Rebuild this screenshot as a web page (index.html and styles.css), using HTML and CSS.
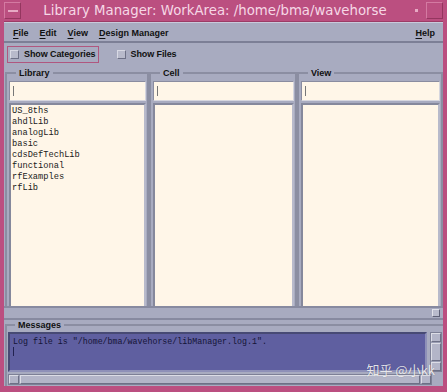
FILE: index.html
```html
<!DOCTYPE html>
<html lang="en">
<head>
    <meta charset="UTF-8">
    <meta name="viewport" content="width=device-width, initial-scale=1.0">
    <title>Library Manager</title>
    <link rel="stylesheet" href="styles.css">
</head>
<body>
    <div class="window">
        <div class="titlebar">
            <span class="tb-btn"><span class="tb-dash"></span></span>
            <span class="title">Library Manager: WorkArea: /home/bma/wavehorse</span>
            <span class="tb-dot"></span>
            <span class="tb-btn tb-max"></span>
        </div>
        <div class="client">
            <div class="menubar">
                <span class="menu"><u>F</u>ile</span>
                <span class="menu"><u>E</u>dit</span>
                <span class="menu"><u>V</u>iew</span>
                <span class="menu"><u>D</u>esign Manager</span>
                <span class="menu help"><u>H</u>elp</span>
            </div>
            <div class="options">
                <label class="toggle focused"><span class="check"></span>Show Categories</label>
                <label class="toggle"><span class="check"></span>Show Files</label>
            </div>
            <div class="browser">
                <fieldset class="pane">
                    <legend>Library</legend>
                    <div class="entry"><span class="caret"></span></div>
                    <ul class="list">
                        <li>US_8ths</li>
                        <li>ahdlLib</li>
                        <li>analogLib</li>
                        <li>basic</li>
                        <li>cdsDefTechLib</li>
                        <li>functional</li>
                        <li>rfExamples</li>
                        <li>rfLib</li>
                    </ul>
                </fieldset>
                <fieldset class="pane">
                    <legend>Cell</legend>
                    <div class="entry"><span class="caret"></span></div>
                    <ul class="list"></ul>
                </fieldset>
                <fieldset class="pane">
                    <legend>View</legend>
                    <div class="entry"><span class="caret"></span></div>
                    <ul class="list"></ul>
                </fieldset>
            </div>
            <div class="sash"><span class="sash-handle"></span></div>
            <fieldset class="messages">
                <legend>Messages</legend>
                <div class="log-row">
                    <div class="log">
                        <div>Log file is "/home/bma/wavehorse/libManager.log.1".</div>
                        <span class="log-caret"></span>
                    </div>
                    <div class="vscroll"><span class="arrow"></span><span class="thumb"></span><span class="arrow"></span></div>
                </div>
                <div class="hscroll"><span class="arrow"></span><span class="hthumb"></span><span class="arrow"></span></div>
            </fieldset>
        </div>
        <div class="watermark">知乎 @小kk</div>
    </div>
</body>
</html>
```

FILE: styles.css
```css
* {
    box-sizing: border-box;
}
body {
    margin: 0;
    background: #b94d7e;
}
.window {
    position: relative;
    width: 447px;
    height: 392px;
    background: #bb4f80;
    padding: 0 4px 6px 4px;
    display: flex;
    flex-direction: column;
    font-family: "Liberation Sans", Arial, sans-serif;
}
.titlebar {
    flex-shrink: 0;
    height: 22px;
    display: flex;
    align-items: center;
    color: #f6d8e6;
    border-bottom: 1px solid #9c3c66;
}
.tb-btn {
    flex-shrink: 0;
    width: 17px;
    height: 17px;
    border: 1px solid #d47aa2;
    border-right-color: #94365f;
    border-bottom-color: #94365f;
    display: flex;
    align-items: center;
    justify-content: center;
}
.tb-dash {
    width: 10px;
    height: 2px;
    background: #e7a9c4;
}
.title {
    flex: 1;
    min-width: 0;
    white-space: nowrap;
    text-align: center;
    font-family: "DejaVu Sans", sans-serif;
    font-size: 13.3px;
    padding-right: 6px;
}
.tb-dot {
    flex-shrink: 0;
    width: 3px;
    height: 3px;
    background: #e7a9c4;
    margin-right: 8px;
}
.client {
    flex: 1;
    min-height: 0;
    background: #a8abc0;
    display: flex;
    flex-direction: column;
}
.menubar {
    flex-shrink: 0;
    height: 21px;
    display: flex;
    align-items: center;
    padding: 1px 8px 0 9px;
    border-top: 1px solid #c8cadb;
    border-bottom: 2px solid #7c7f96;
    font-size: 9px;
    font-weight: bold;
    color: #111;
}
.menu {
    margin-right: 11px;
}
.menu u {
    text-underline-offset: 2px;
}
.help {
    margin-left: auto;
    margin-right: 0;
}
.options {
    flex-shrink: 0;
    height: 21px;
    display: flex;
    align-items: center;
    gap: 15px;
    padding: 1px 3px 0 3px;
    font-size: 9px;
    font-weight: bold;
    color: #111;
    letter-spacing: -0.1px;
}
.toggle {
    display: flex;
    align-items: center;
    height: 17px;
    padding: 0 2px 0 2px;
    border: 1px solid transparent;
}
.toggle.focused {
    border-color: #b0577f;
}
.check {
    width: 9px;
    height: 9px;
    margin-right: 5px;
    background: #b8bacb;
    border: 1px solid #d8d9e4;
    border-right-color: #6d7086;
    border-bottom-color: #6d7086;
}
.browser {
    flex-shrink: 0;
    display: grid;
    grid-template-columns: 144px 148px 146px;
    padding: 4px 0 0 1px;
    height: 242px;
}
.pane {
    margin: 0;
    padding: 3px 1px 0 2px;
    border: 2px solid #8b8ea2;
    border-bottom: none;
    display: flex;
    flex-direction: column;
    min-width: 0;
}
.pane legend,
.messages legend {
    font-size: 9px;
    font-weight: bold;
    color: #111;
    padding: 0 3px;
    margin-left: 7px;
    line-height: 10px;
}
.entry {
    flex-shrink: 0;
    height: 20px;
    background: #fff6e8;
    border: 1px solid #8a8ca0;
    border-right-color: #d6d6df;
    border-bottom-color: #d6d6df;
    padding: 4px 2px;
}
.caret {
    display: block;
    width: 3px;
    height: 10px;
    border-left: 1px solid #777;
    margin-left: 1px;
}
.list {
    flex: 1;
    margin: 2px 0 0 0;
    padding: 1px 1px 0 1px;
    list-style: none;
    background: #fff6e8;
    border: 2px solid #85889c;
    border-bottom: none;
    border-right-color: #b8bacb;
    font-family: "Liberation Mono", "DejaVu Sans Mono", monospace;
    font-size: 8.7px;
    line-height: 11px;
    color: #1a1a1a;
}
.sash {
    flex-shrink: 0;
    height: 14px;
    display: flex;
    align-items: center;
    justify-content: flex-end;
    padding-right: 3px;
    border-top: 2px solid #878aa0;
    border-bottom: 2px solid #878aa0;
}
.sash-handle {
    width: 8px;
    height: 8px;
    background: #b9bbcc;
    border: 1px solid #e1e2ea;
    border-right-color: #5e6177;
    border-bottom-color: #5e6177;
}
.messages {
    flex: 1;
    min-height: 0;
    margin: 0 0 0 1px;
    padding: 2px 1px 0 1px;
    border: 2px solid #8b8ea2;
    border-right: none;
    border-bottom: none;
    min-width: 0;
    display: flex;
    flex-direction: column;
}
.log-row {
    display: flex;
    gap: 3px;
    height: 40px;
    flex-shrink: 0;
}
.log {
    flex: 1;
    background: #5f5fa0;
    border: 2px solid #474a74;
    border-right-color: #8e90b8;
    border-bottom-color: #8e90b8;
    padding: 3px 3px;
    font-family: "Liberation Mono", "DejaVu Sans Mono", monospace;
    font-size: 8.3px;
    line-height: 10px;
    color: #141436;
}
.log-caret {
    display: block;
    width: 3px;
    height: 9px;
    border-left: 1px solid #222250;
}
.vscroll {
    width: 12px;
    display: flex;
    flex-direction: column;
    background: #9b9eb4;
    border: 1px solid #7d8096;
}
.thumb {
    flex: 1;
    margin: 1px 0;
    background: #b3b5c8;
    border: 1px solid #dcdde6;
    border-right-color: #6d7086;
    border-bottom-color: #6d7086;
}
.arrow {
    flex-shrink: 0;
    width: 10px;
    height: 9px;
    background: #b3b5c8;
    border: 1px solid #dcdde6;
    border-right-color: #6d7086;
    border-bottom-color: #6d7086;
}
.hscroll {
    flex-shrink: 0;
    margin-top: 2px;
    height: 11px;
    width: 424px;
    display: flex;
    background: #9b9eb4;
    border: 1px solid #7d8096;
}
.hthumb {
    flex: 1;
    margin: 0 1px;
    background: #b3b5c8;
    border: 1px solid #dcdde6;
    border-right-color: #6d7086;
    border-bottom-color: #6d7086;
}
.watermark {
    position: absolute;
    right: 12px;
    bottom: 13px;
    font-family: "Noto Sans CJK SC", sans-serif;
    font-size: 13px;
    color: rgba(255, 255, 255, 0.85);
    text-shadow: 0 0 1px rgba(0, 0, 0, 0.3);
}
```
